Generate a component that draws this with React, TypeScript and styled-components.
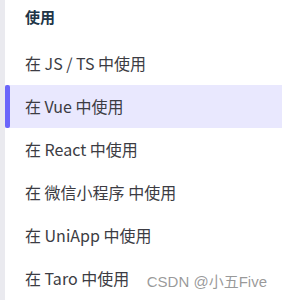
import React from "react";
import styled, { createGlobalStyle } from "styled-components";

const Global = createGlobalStyle`
  html, body { margin: 0; padding: 0; background: #fff; }
  body { font-family: "Noto Sans CJK SC", "Noto Sans", sans-serif; }
`;

const Page = styled.div`
  display: flex;
  width: 282px;
  height: 300px;
  overflow: hidden;
  position: relative;
`;

const Strip = styled.div`
  width: 5px;
  flex: none;
  background: #eaeaef;
`;

const Nav = styled.nav`
  flex: 1;
  display: flex;
  flex-direction: column;
`;

const Header = styled.div`
  height: 42px;
  box-sizing: border-box;
  padding: 6px 0 0 20px;
  font-size: 15px;
  font-weight: 700;
  line-height: 22px;
  color: #213547;
`;

const Item = styled.div<{ $active?: boolean }>`
  height: 43.2px;
  box-sizing: border-box;
  display: flex;
  align-items: center;
  padding-left: 20px;
  font-size: 16px;
  color: #3c3c43;
  position: relative;
  white-space: pre;
  background: ${(p) => (p.$active ? "#e9e8fe" : "transparent")};
  &::before {
    content: "";
    display: ${(p) => (p.$active ? "block" : "none")};
    position: absolute;
    left: 0;
    top: 0;
    bottom: 0;
    width: 5px;
    border-radius: 2px;
    background: #6b66fa;
  }
`;

const Watermark = styled.div`
  position: absolute;
  right: 15px;
  bottom: 9px;
  font-family: "Liberation Sans", "Noto Sans CJK SC", sans-serif;
  font-size: 15px;
  color: rgba(120, 120, 120, 0.75);
`;

const items = [
  "在 JS / TS 中使用",
  "在 Vue 中使用",
  "在 React 中使用",
  "在 微信小程序 中使用",
  "在 UniApp 中使用",
  "在 Taro 中使用",
];

export default function App() {
  return (
    <>
      <Global />
      <Page>
        <Strip />
        <Nav>
          <Header>使用</Header>
          {items.map((t, i) => (
            <Item key={t} $active={i === 1}>
              {t}
            </Item>
          ))}
        </Nav>
        <Watermark>CSDN @小五Five</Watermark>
      </Page>
    </>
  );
}
